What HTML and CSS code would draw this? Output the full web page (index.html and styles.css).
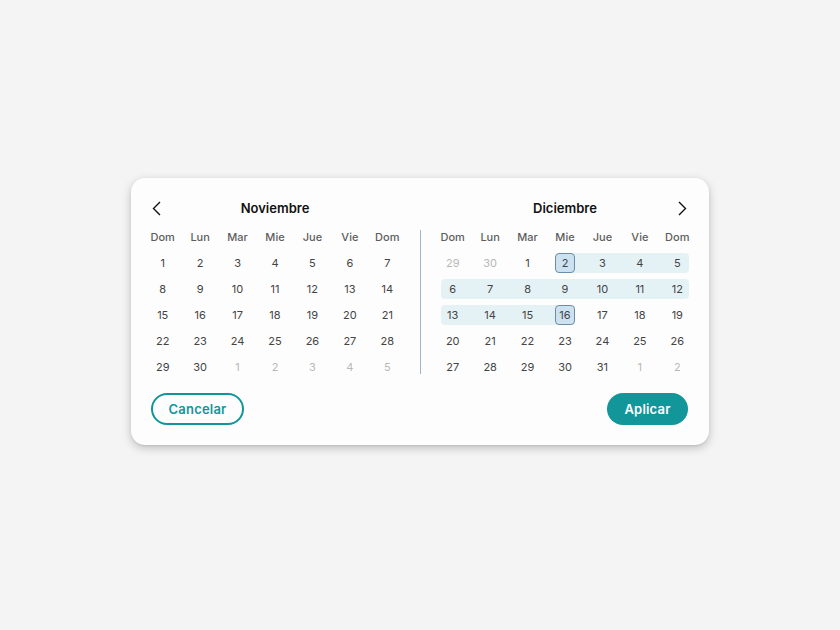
FILE: index.html
```html
<!DOCTYPE html>
<html lang="es">
<head>
    <meta charset="UTF-8">
    <meta name="viewport" content="width=device-width, initial-scale=1.0">
    <title>Selector de fechas</title>
    <link rel="stylesheet" href="styles.css">
</head>
<body>
    <div class="picker">
        <div class="months">
            <!-- Noviembre -->
            <div class="month">
                <div class="month-head">
                    <button class="nav" type="button">
                        <svg width="9" height="15" viewBox="0 0 9 15"><path d="M8 1 1.5 7.5 8 14" fill="none" stroke="#111" stroke-width="1.4"/></svg>
                    </button>
                    <h2>Noviembre</h2>
                    <span></span>
                </div>
                <div class="weekdays">
                    <span>Dom</span><span>Lun</span><span>Mar</span><span>Mie</span><span>Jue</span><span>Vie</span><span>Dom</span>
                </div>
                <div class="days">
                    <span>1</span><span>2</span><span>3</span><span>4</span><span>5</span><span>6</span><span>7</span>
                    <span>8</span><span>9</span><span>10</span><span>11</span><span>12</span><span>13</span><span>14</span>
                    <span>15</span><span>16</span><span>17</span><span>18</span><span>19</span><span>20</span><span>21</span>
                    <span>22</span><span>23</span><span>24</span><span>25</span><span>26</span><span>27</span><span>28</span>
                    <span>29</span><span>30</span><span class="muted">1</span><span class="muted">2</span><span class="muted">3</span><span class="muted">4</span><span class="muted">5</span>
                </div>
            </div>

            <div class="divider"></div>

            <!-- Diciembre -->
            <div class="month">
                <div class="month-head">
                    <span></span>
                    <h2>Diciembre</h2>
                    <button class="nav nav-next" type="button">
                        <svg width="9" height="15" viewBox="0 0 9 15"><path d="M1 1 7.5 7.5 1 14" fill="none" stroke="#111" stroke-width="1.4"/></svg>
                    </button>
                </div>
                <div class="weekdays">
                    <span>Dom</span><span>Lun</span><span>Mar</span><span>Mie</span><span>Jue</span><span>Vie</span><span>Dom</span>
                </div>
                <div class="days">
                    <span class="muted">29</span><span class="muted">30</span><span>1</span><span class="start"><b>2</b></span><span class="range">3</span><span class="range">4</span><span class="range">5</span>
                    <span class="range">6</span><span class="range">7</span><span class="range">8</span><span class="range">9</span><span class="range">10</span><span class="range">11</span><span class="range">12</span>
                    <span class="range">13</span><span class="range">14</span><span class="range">15</span><span class="end"><b>16</b></span><span>17</span><span>18</span><span>19</span>
                    <span>20</span><span>21</span><span>22</span><span>23</span><span>24</span><span>25</span><span>26</span>
                    <span>27</span><span>28</span><span>29</span><span>30</span><span>31</span><span class="muted">1</span><span class="muted">2</span>
                </div>
            </div>
        </div>

        <div class="actions">
            <button class="btn btn-outline" type="button">Cancelar</button>
            <button class="btn btn-fill" type="button">Aplicar</button>
        </div>
    </div>
</body>
</html>
```

FILE: styles.css
```css
* {
    margin: 0;
    padding: 0;
    box-sizing: border-box;
    font-family: "Inter", "Open Sans", sans-serif;
}

body {
    display: flex;
    justify-content: center;
    align-items: flex-start;
    min-height: 100vh;
    background: #f4f4f4;
    padding-top: 178px;
}

.picker {
    width: 578px;
    background: #fdfdfd;
    border-radius: 14px;
    padding: 18px 13px 20px 13px;
    box-shadow: 0 3px 10px rgba(0, 0, 0, 0.22), 0 1px 2px rgba(0, 0, 0, 0.08);
}

.months {
    display: flex;
    justify-content: space-between;
}

.month {
    width: 262px;
}

.month-head {
    display: grid;
    grid-template-columns: 24px 1fr 24px;
    align-items: center;
    height: 24px;
}

.month-head h2 {
    text-align: center;
    font-size: 13px;
    font-weight: 600;
    color: #111;
}

.nav {
    display: flex;
    justify-content: center;
    align-items: center;
    background: none;
    border: none;
    cursor: pointer;
    height: 24px;
}

.nav-next {
    padding-right: 3px;
}

.weekdays,
.days {
    display: grid;
    grid-template-columns: repeat(7, 1fr);
}

.weekdays {
    margin-top: 7px;
    height: 20px;
    align-items: center;
}

.weekdays span {
    text-align: center;
    font-size: 11px;
    font-weight: 500;
    color: #5e5e5e;
}

.days {
    margin-top: 6px;
    row-gap: 6px;
}

.days span {
    display: flex;
    justify-content: center;
    align-items: center;
    height: 20px;
    font-size: 11px;
    color: #444;
}

.days span.muted {
    color: #b8b8b8;
}

/* selected range */
.days .range {
    background: #e4f2f5;
}

.days .range:nth-child(7n+1) {
    margin-left: 7px;
    padding-right: 7px;
    border-radius: 4px 0 0 4px;
}

.days .range:nth-child(7n) {
    margin-right: 7px;
    padding-left: 7px;
    border-radius: 0 4px 4px 0;
}

.days .start {
    background: linear-gradient(to right, transparent 50%, #e4f2f5 50%);
}

.days .end {
    background: linear-gradient(to right, #e4f2f5 50%, transparent 50%);
}

.days b {
    display: flex;
    justify-content: center;
    align-items: center;
    width: 20px;
    height: 20px;
    font-weight: 400;
    background: #cde2f1;
    border: 1px solid #6d8ca6;
    border-radius: 4px;
}

.divider {
    width: 1px;
    background: #9db7ca;
    margin: 34px 0 3px;
}

.actions {
    display: flex;
    justify-content: space-between;
    margin-top: 16px;
    padding: 0 8px 0 7px;
}

.btn {
    height: 32px;
    border-radius: 16px;
    font-size: 13px;
    font-weight: 600;
    letter-spacing: 0.2px;
    cursor: pointer;
}

.btn-outline {
    width: 93px;
    background: transparent;
    border: 2px solid #12959a;
    color: #12959a;
}

.btn-fill {
    width: 81px;
    background: #12969a;
    border: none;
    color: #fff;
}
```
